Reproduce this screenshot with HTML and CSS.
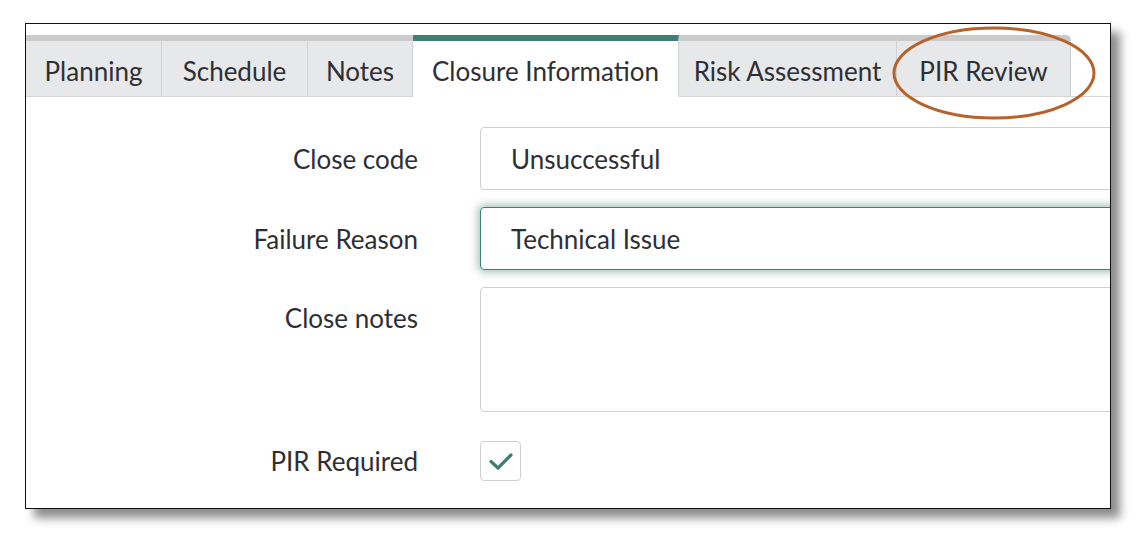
FILE: index.html
```html
<!DOCTYPE html>
<html>
<head>
<meta charset="utf-8">
<link rel="stylesheet" href="styles.css">
</head>
<body>
<div class="frame">
  <div class="tabs">
    <div class="tab t-planning">Planning</div>
    <div class="tab t-schedule">Schedule</div>
    <div class="tab t-notes">Notes</div>
    <div class="tab t-closure active">Closure Information</div>
    <div class="tab t-risk">Risk Assessment</div>
    <div class="tab t-pir">PIR Review</div>
    <div class="tab-rest"></div>
  </div>
  <div class="form">
    <div class="row row-input">
      <label class="lbl">Close code</label>
      <div class="field">Unsuccessful</div>
    </div>
    <div class="row row-input">
      <label class="lbl">Failure Reason</label>
      <div class="field focus">Technical Issue</div>
    </div>
    <div class="row row-area">
      <label class="lbl lbl-top">Close notes</label>
      <div class="field area"></div>
    </div>
    <div class="row row-check">
      <label class="lbl">PIR Required</label>
      <div class="check">
        <svg width="26" height="20" viewBox="0 0 26 20"><path d="M3 10.5 L10 17 L23 4" fill="none" stroke="#3e7f73" stroke-width="3.2" stroke-linecap="round" stroke-linejoin="round"/></svg>
      </div>
    </div>
  </div>
  <svg class="ring" width="206" height="96" viewBox="0 0 206 96"><ellipse cx="103" cy="48" rx="100" ry="45" fill="none" stroke="#b5622b" stroke-width="3"/></svg>
</div>
</body>
</html>
```
FILE: styles.css
```css
html, body {
  margin: 0;
  padding: 0;
  background: #ffffff;
}
body {
  font-family: Lato, "Open Sans", sans-serif;
  color: #2f2f33;
  width: 1148px;
  height: 538px;
  overflow: hidden;
}
.frame {
  position: relative;
  margin: 23px 0 0 25px;
  width: 1084px;
  height: 484px;
  border: 1px solid #111;
  background: #fff;
  overflow: hidden;
  box-shadow: 9px 9px 9px rgba(0, 0, 0, 0.45);
}
.tabs {
  display: flex;
  margin-top: 11px;
  height: 62px;
}
.tab {
  box-sizing: border-box;
  height: 62px;
  background: #e6e8ea;
  border-top: 6px solid #cbcbcb;
  border-right: 1px solid #d2d2d2;
  border-bottom: 1px solid #d6d6d6;
  display: flex;
  align-items: center;
  justify-content: center;
  font-size: 26px;
  padding-top: 4px;
  white-space: nowrap;
}
.t-planning { width: 136px; }
.t-schedule { width: 146px; }
.t-notes { width: 105px; }
.t-closure { width: 266px; }
.t-risk { width: 218px; }
.t-pir { width: 174px; border-top-right-radius: 5px; }
.tab.active {
  background: #fff;
  border-top-color: #3e8174;
  border-bottom-color: #fff;
}
.tab-rest {
  flex: 1;
  border-bottom: 1px solid #d6d6d6;
}
.form {
  display: flex;
  flex-direction: column;
  padding-top: 30px;
}
.row {
  display: flex;
  align-items: center;
}
.lbl {
  box-sizing: border-box;
  width: 392px;
  text-align: right;
  font-size: 26px;
  flex: none;
}
.field {
  box-sizing: border-box;
  margin-left: 62px;
  width: 700px;
  flex: none;
  border: 1px solid #cfcfcf;
  border-radius: 4px;
  padding-left: 30px;
  padding-top: 1px;
  font-size: 26px;
  display: flex;
  align-items: center;
}
.row-input .field { height: 63px; }
.row-input { margin-bottom: 17px; }
.field.focus {
  border-color: #3e8174;
  box-shadow: 0 0 9px 2px rgba(62, 129, 116, 0.5);
}
.row-area { align-items: flex-start; margin-bottom: 29px; }
.lbl-top { padding-top: 15px; }
.field.area { height: 125px; }
.row-check .check {
  box-sizing: border-box;
  margin-left: 62px;
  width: 41px;
  height: 40px;
  border: 1px solid #cfcfcf;
  border-radius: 4px;
  display: flex;
  align-items: center;
  justify-content: center;
}
.ring {
  position: absolute;
  left: 865px;
  top: 1px;
}
```
